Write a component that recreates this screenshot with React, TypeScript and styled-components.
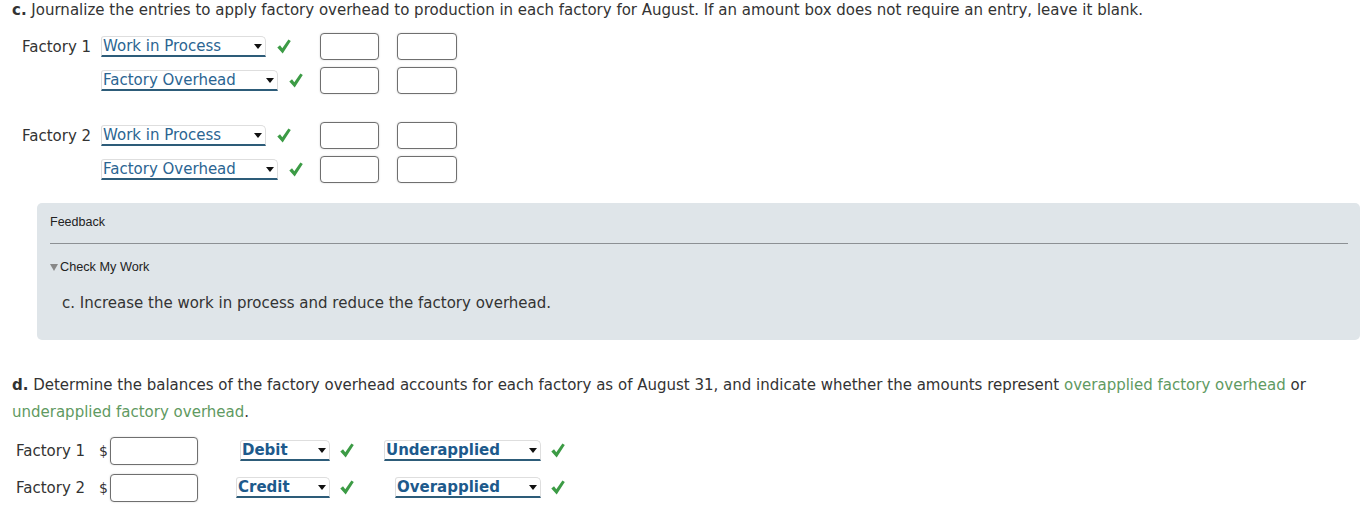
import React from 'react';
import styled, { createGlobalStyle } from 'styled-components';

const GlobalStyle = createGlobalStyle`
  html, body {
    margin: 0;
    padding: 0;
    background: #fff;
  }
  body {
    font-family: "DejaVu Sans", Verdana, sans-serif;
    color: #333;
  }
`;

const Page = styled.div`
  width: 1362px;
  height: 516px;
  overflow: hidden;
  font-size: 15px;
`;

const Prompt = styled.p`
  margin: 0;
  padding: 1px 0 0 12px;
  line-height: 18px;
  font-size: 15px;
`;

const Journal = styled.div`
  margin-top: 11px;
  display: flex;
  flex-direction: column;
  gap: 22px;
`;

const EntryGroup = styled.div`
  display: grid;
  grid-template-columns: 101px 219px 59px 18px 60px;
  grid-auto-rows: 33.5px;
  align-items: center;
`;

const RowLabel = styled.div`
  padding-left: 22px;
  white-space: nowrap;
`;

const AccountCell = styled.div`
  display: flex;
  align-items: center;
  gap: 11px;
`;

const Select = styled.div<{ $bold?: boolean; $w: number }>`
  display: inline-flex;
  align-items: center;
  justify-content: space-between;
  box-sizing: border-box;
  width: ${(p) => p.$w}px;
  height: 21px;
  padding: 0 3px 0 1px;
  background: #fff;
  border: 1px solid #dedede;
  border-bottom: 2px solid #2d5c79;
  border-radius: 3px 5px 0 0;
  color: ${(p) => (p.$bold ? '#1d5a8c' : '#2b6592')};
  font-weight: ${(p) => (p.$bold ? 'bold' : 'normal')};
  line-height: 18px;
  white-space: nowrap;
`;

const Arrow = styled.span`
  flex: none;
  width: 0;
  height: 0;
  border-left: 4px solid transparent;
  border-right: 4px solid transparent;
  border-top: 5px solid #111;
  margin-top: 1px;
`;

const AmountBox = styled.div<{ $w: number; $h: number }>`
  width: ${(p) => p.$w}px;
  height: ${(p) => p.$h}px;
  box-sizing: border-box;
  border: 1px solid #6f6f6f;
  border-radius: 4px;
  background: #fff;
  box-shadow: 0 0 2px rgba(0, 0, 0, 0.18);
`;

const Feedback = styled.section`
  margin: 17px 2px 0 37px;
  height: 137px;
  box-sizing: border-box;
  padding: 11px 12px 0 13px;
  background: #dfe5e9;
  border-radius: 5px;
`;

const FeedbackTitle = styled.div`
  font-family: "Liberation Sans", Arial, sans-serif;
  font-size: 12.5px;
  color: #222;
  line-height: 16px;
  padding-bottom: 13px;
  border-bottom: 1px solid #8c9094;
`;

const Toggle = styled.div`
  display: flex;
  align-items: center;
  gap: 2px;
  margin-top: 15px;
  font-family: "Liberation Sans", Arial, sans-serif;
  font-size: 12.7px;
  color: #222;
  line-height: 16px;
`;

const ToggleArrow = styled.span`
  width: 0;
  height: 0;
  border-left: 4px solid transparent;
  border-right: 4px solid transparent;
  border-top: 7px solid #888;
`;

const FeedbackText = styled.p`
  margin: 19px 0 0 12px;
  font-size: 15px;
  line-height: 18px;
  color: #333;
`;

const PartD = styled.p`
  margin: 32px 0 0 12px;
  font-size: 15px;
  line-height: 27px;
`;

const Term = styled.span`
  color: #5f9a62;
`;

const Balances = styled.div`
  display: grid;
  grid-template-columns: 99px 11px 88px 132px 54px 157px 30px;
  grid-auto-rows: 37px;
  align-items: center;
  margin-top: 6px;
`;

const BalanceLabel = styled.div`
  padding-left: 16px;
  white-space: nowrap;
`;

const Dollar = styled.div`
  font-size: 14px;
`;

const RightCell = styled.div`
  display: flex;
  justify-content: flex-end;
`;

const CheckCell = styled.div`
  display: flex;
  padding-left: 10px;
`;

const Check = () => (
  <svg width="14" height="15" viewBox="0 0 14 15">
    <path d="M0.3 8.4 L3 6.2 L5.3 9.3 L11.4 0.4 L13.8 2.1 L5.7 14.4 Z" fill="#3c9b45" />
  </svg>
);

const Dropdown: React.FC<{ label: string; width: number; bold?: boolean }> = ({ label, width, bold }) => (
  <Select $bold={bold} $w={width}>
    <span>{label}</span>
    <Arrow />
  </Select>
);

const journal = [
  {
    factory: 'Factory 1',
    rows: [
      { account: 'Work in Process', width: 165 },
      { account: 'Factory Overhead', width: 177 },
    ],
  },
  {
    factory: 'Factory 2',
    rows: [
      { account: 'Work in Process', width: 165 },
      { account: 'Factory Overhead', width: 177 },
    ],
  },
];

const balances = [
  { factory: 'Factory 1', side: 'Debit', sideW: 90, state: 'Underapplied', stateW: 157 },
  { factory: 'Factory 2', side: 'Credit', sideW: 94, state: 'Overapplied', stateW: 146 },
];

const App: React.FC = () => {
  return (
    <Page>
      <GlobalStyle />
      <Prompt>
        <b>c.</b> Journalize the entries to apply factory overhead to production in each factory for August. If an amount
        box does not require an entry, leave it blank.
      </Prompt>

      <Journal>
        {journal.map((group) => (
          <EntryGroup key={group.factory}>
            {group.rows.map((row, ri) => (
              <React.Fragment key={row.account}>
                <RowLabel>{ri === 0 ? group.factory : ''}</RowLabel>
                <AccountCell>
                  <Dropdown label={row.account} width={row.width} />
                  <Check />
                </AccountCell>
                <AmountBox $w={59} $h={27} />
                <div />
                <AmountBox $w={60} $h={27} />
              </React.Fragment>
            ))}
          </EntryGroup>
        ))}
      </Journal>

      <Feedback>
        <FeedbackTitle>Feedback</FeedbackTitle>
        <Toggle>
          <ToggleArrow />
          Check My Work
        </Toggle>
        <FeedbackText>c. Increase the work in process and reduce the factory overhead.</FeedbackText>
      </Feedback>

      <PartD>
        <b>d.</b> Determine the balances of the factory overhead accounts for each factory as of August 31, and indicate
        whether the amounts represent <Term>overapplied factory overhead</Term> or <Term>underapplied factory overhead</Term>.
      </PartD>

      <Balances>
        {balances.map((b) => (
          <React.Fragment key={b.factory}>
            <BalanceLabel>{b.factory}</BalanceLabel>
            <Dollar>$</Dollar>
            <AmountBox $w={88} $h={28} />
            <RightCell>
              <Dropdown label={b.side} width={b.sideW} bold />
            </RightCell>
            <CheckCell>
              <Check />
            </CheckCell>
            <RightCell>
              <Dropdown label={b.state} width={b.stateW} bold />
            </RightCell>
            <CheckCell>
              <Check />
            </CheckCell>
          </React.Fragment>
        ))}
      </Balances>
    </Page>
  );
};

export default App;
